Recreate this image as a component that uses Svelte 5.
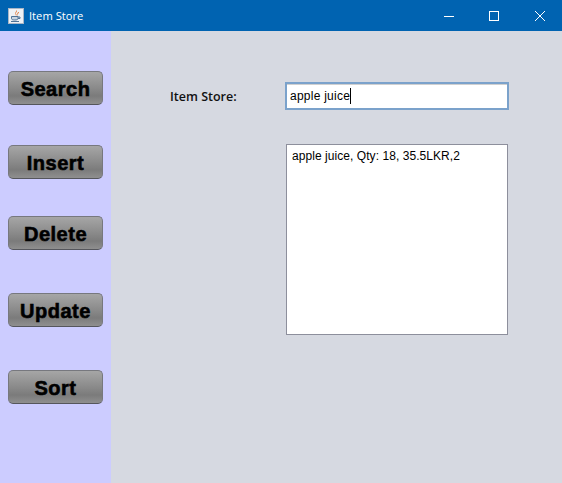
<script lang="ts">
	const actions = ['Search', 'Insert', 'Delete', 'Update', 'Sort'];
	let query = $state('apple juice');
	const results = ['apple juice, Qty: 18, 35.5LKR,2'];
</script>

<div class="window">
	<header class="titlebar">
		<svg class="app-icon" width="16" height="16" viewBox="0 0 16 16">
			<rect x="0.5" y="0.5" width="15" height="15" fill="#eef1f5" stroke="#aab6c6" />
			<path d="M8.5 2 C10 4 6.5 5 8 7.5 C6 6 8 4 8.5 2 Z" fill="#e0702a" />
			<path d="M10.5 4 C10.5 5.5 8.5 6 9 7.5" fill="none" stroke="#e0702a" />
			<path d="M3.5 8.5 H10 V10.5 C10 11.5 9 12 6.8 12 C4.5 12 3.5 11.5 3.5 10.5 Z" fill="#c9d5e2" stroke="#4f7296" />
			<path d="M10 9 H12 V10.5 H10" fill="none" stroke="#4f7296" />
			<path d="M3 13.5 H11" stroke="#4f7296" />
		</svg>
		<span class="title">Item Store</span>
		<div class="controls">
			<span class="control">
				<svg width="12" height="12" viewBox="0 0 12 12"><path d="M2 6.5 H12" stroke="#fff" /></svg>
			</span>
			<span class="control">
				<svg width="12" height="12" viewBox="0 0 12 12"><rect x="1.5" y="1.5" width="9" height="9" fill="none" stroke="#fff" /></svg>
			</span>
			<span class="control">
				<svg width="12" height="12" viewBox="0 0 12 12"><path d="M1 1 L11 11 M11 1 L1 11" stroke="#fff" /></svg>
			</span>
		</div>
	</header>
	<div class="body">
		<nav class="sidebar">
			{#each actions as action}
				<button class="action">{action}</button>
			{/each}
		</nav>
		<main class="content">
			<div class="search-row">
				<label class="search-label" for="query">Item Store:</label>
				<div class="field" id="query">
					<span class="field-text">{query}</span><span class="caret"></span>
				</div>
			</div>
			<ul class="results">
				{#each results as row}
					<li>{row}</li>
				{/each}
			</ul>
		</main>
	</div>
</div>

<style>
	:global(body) {
		margin: 0;
	}

	.window {
		width: 562px;
		height: 483px;
		display: flex;
		flex-direction: column;
		overflow: hidden;
		font-family: 'Liberation Sans', Arial, sans-serif;
	}

	.titlebar {
		flex-shrink: 0;
		height: 31px;
		display: flex;
		align-items: center;
		padding-left: 8px;
		background: #0063b1;
		color: #fff;
	}

	.app-icon {
		flex-shrink: 0;
		margin-right: 5px;
	}

	.title {
		font-family: 'Open Sans', 'Noto Sans', sans-serif;
		font-size: 11.2px;
	}

	.controls {
		margin-left: auto;
		margin-right: -1px;
		display: flex;
	}

	.control {
		width: 46px;
		height: 31px;
		display: flex;
		align-items: center;
		justify-content: center;
	}

	.body {
		flex: 1;
		display: flex;
		min-height: 0;
	}

	.sidebar {
		flex-shrink: 0;
		width: 111px;
		box-sizing: border-box;
		padding: 40px 8px 0;
		display: flex;
		flex-direction: column;
		background: #ccccff;
	}

	.action {
		flex-shrink: 0;
		width: 95px;
		height: 34px;
		padding: 2px 0 0;
		border: 1px solid #77787e;
		border-bottom-color: #55565c;
		border-radius: 5px;
		background: linear-gradient(to bottom, #a6a6a6 0%, #8a8a8a 50%, #7b7b7b 75%, #8f8f8f 100%);
		color: #000;
		font-family: 'Liberation Sans', Arial, sans-serif;
		font-size: 20px;
		font-weight: bold;
		letter-spacing: 0.5px;
		-webkit-text-stroke: 0.6px #000;
	}

	.action:nth-child(2) {
		margin-top: 40px;
	}

	.action:nth-child(3) {
		margin-top: 37px;
	}

	.action:nth-child(4),
	.action:nth-child(5) {
		margin-top: 43px;
	}

	.content {
		flex: 1;
		background: #d6d9e1;
		padding: 51px 0 0 59px;
	}

	.search-row {
		display: flex;
		align-items: center;
		height: 28px;
	}

	.search-label {
		width: 115px;
		flex-shrink: 0;
		font-family: 'Open Sans', 'Noto Sans', sans-serif;
		font-size: 12.5px;
		font-weight: 600;
		color: #111;
	}

	.field {
		width: 224px;
		height: 28px;
		box-sizing: border-box;
		display: flex;
		align-items: center;
		padding-left: 3px;
		background: #fff;
		border: 2px solid #7ba2cb;
		box-shadow: inset 0 1px 0 #d0d0d0;
		font-size: 12px;
		letter-spacing: 0.25px;
		color: #000;
	}

	.caret {
		width: 1px;
		height: 16px;
		background: #000;
	}

	.results {
		list-style: none;
		box-sizing: border-box;
		width: 222px;
		height: 191px;
		margin: 34px 0 0 116px;
		padding: 4px 5px;
		background: #fff;
		border: 1px solid #8d8f9c;
		font-size: 12px;
		letter-spacing: 0.06px;
		line-height: 14px;
		color: #000;
	}
</style>
